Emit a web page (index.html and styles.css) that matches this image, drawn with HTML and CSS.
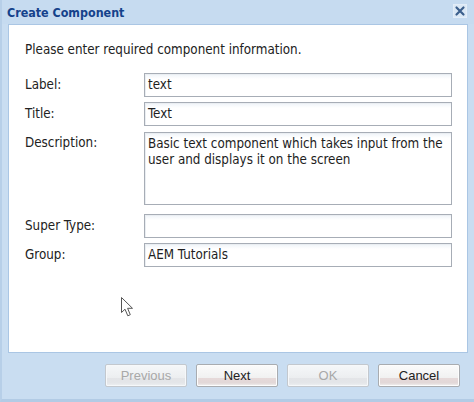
FILE: index.html
```html
<!DOCTYPE html>
<html>
<head>
<meta charset="utf-8">
<link rel="stylesheet" href="styles.css">
</head>
<body>
<div class="window">
  <div class="titlebar">
    <span class="title">Create Component</span>
    <span class="close">
      <svg width="14" height="14" viewBox="0 0 14 14"><path d="M3.5 3.5 L10.5 10.5 M10.5 3.5 L3.5 10.5" stroke="#3c5f8c" stroke-width="2.2" stroke-linecap="round"/></svg>
    </span>
  </div>
  <div class="panel">
    <p class="intro">Please enter required component information.</p>
    <div class="form">
      <div class="lbl">Label:</div>
      <div class="field">text</div>
      <div class="lbl">Title:</div>
      <div class="field">Text</div>
      <div class="lbl">Description:</div>
      <div class="field area">Basic text component which takes input from the<br>user and displays it on the screen</div>
      <div class="lbl">Super Type:</div>
      <div class="field"></div>
      <div class="lbl">Group:</div>
      <div class="field">AEM Tutorials</div>
    </div>
    <svg class="cursor" width="15" height="22" viewBox="0 0 15 22"><path d="M1.5 1.5 L1.5 16.5 L5 13.2 L7.8 19.8 L10.3 18.7 L7.6 12.3 L12.5 12.3 Z" fill="#fff" stroke="#555" stroke-width="1" stroke-linejoin="round"/></svg>
  </div>
  <div class="footer">
    <button class="btn disabled">Previous</button>
    <button class="btn">Next</button>
    <button class="btn disabled">OK</button>
    <button class="btn">Cancel</button>
  </div>
</div>
</body>
</html>
```
FILE: styles.css
```css
html, body {
  margin: 0;
  padding: 0;
  background: #c9ddf1;
}
.window {
  width: 474px;
  height: 402px;
  box-sizing: border-box;
  background: #c9ddf1;
  border-left: 2px solid #b7cfe8;
  border-bottom: 3px solid #b2cbe5;
  display: flex;
  flex-direction: column;
  font-family: "DejaVu Sans Condensed", "DejaVu Sans", sans-serif;
}
.titlebar {
  height: 24px;
  display: flex;
  align-items: center;
  justify-content: space-between;
  padding: 0 7px 0 5px;
  background: #c6dbf0;
}
.title {
  font-weight: bold;
  font-size: 12.4px;
  color: #15428b;
}
.close {
  width: 14px;
  height: 14px;
  box-sizing: border-box;
  border: 1px solid #e3edf8;
  background: #dbe8f5;
  display: flex;
  margin-top: -2px;
}
.close svg { display: block; margin: -1px; }
.panel {
  position: relative;
  margin: 0 6px;
  height: 329px;
  box-sizing: border-box;
  background: #fff;
  border: 1px solid #aac6e4;
  padding: 17px 15px 0 16px;
  color: #222;
  font-size: 13.3px;
}
.intro {
  margin: 0;
  line-height: 16px;
}
.form {
  margin-top: 15px;
  display: grid;
  grid-template-columns: 119px 1fr;
  row-gap: 5px;
}
.lbl {
  padding-top: 4px;
  line-height: 16px;
}
.field {
  height: 24px;
  box-sizing: border-box;
  border: 1px solid #a7adb6;
  background: linear-gradient(#eef3f8, #ffffff 5px);
  box-shadow: inset 1px 1px 0 #eaeef2;
  padding: 3px 4px 0 3px;
  line-height: 16px;
  color: #1e1e1e;
  white-space: nowrap;
}
.field.area {
  height: 73px;
  margin-top: 1px;
  margin-bottom: 4px;
}
.cursor {
  position: absolute;
  left: 111px;
  top: 271px;
}
.footer {
  display: flex;
  justify-content: flex-end;
  gap: 9px;
  padding: 11px 14px 0 0;
}
.btn {
  width: 82px;
  height: 23px;
  border: 1px solid #a9acb0;
  border-radius: 2px;
  background: linear-gradient(#fbfbfb 0%, #f1f1f1 60%, #e6d9d9 62%, #e2d8d8 85%, #f2f2f2 100%);
  font-family: "Liberation Sans", Arial, sans-serif;
  font-size: 13px;
  color: #222;
  padding: 0;
  box-shadow: inset 0 0 0 1px #fdfdfd;
}
.btn.disabled {
  color: #a8a8a8;
  border-color: #c3c8ce;
  background: linear-gradient(#f5f7f9 0%, #eceef0 60%, #e3e4e7 62%, #e4e6e9 85%, #eef0f2 100%);
  box-shadow: inset 0 0 0 1px #f6f8fa;
}
```
